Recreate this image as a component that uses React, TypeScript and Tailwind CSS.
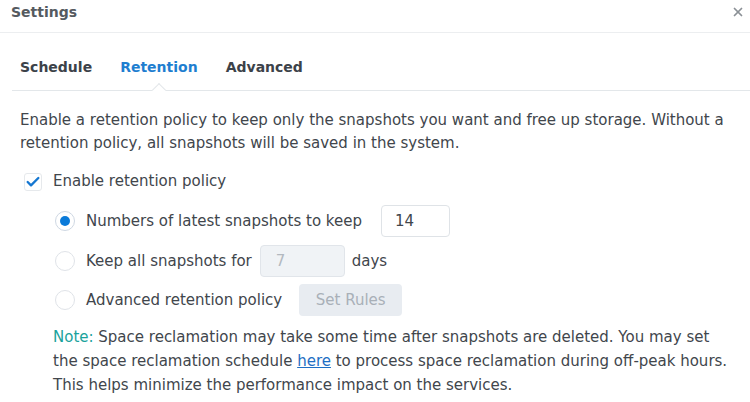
import { Check, X } from "lucide-react";

const font = { fontFamily: '"DejaVu Sans", Verdana, sans-serif' };

function Radio({ checked }: { checked?: boolean }) {
  return (
    <span
      className={`flex h-[20px] w-[20px] shrink-0 items-center justify-center rounded-full border ${
        checked ? "border-[#cfd8e3]" : "border-[#dfe3e8]"
      } bg-white`}
    >
      {checked && <span className="h-[10px] w-[10px] rounded-full bg-[#0a7ad9]" />}
    </span>
  );
}

export default function App() {
  return (
    <div className="h-[402px] w-[750px] overflow-hidden bg-white text-[#41464c]" style={font}>
      <div className="flex h-[33px] items-center justify-between border-b border-[#eceef0] pl-[11px] pr-[5px]">
        <span className="-mt-[8px] text-[14px] font-bold text-[#555a60]">Settings</span>
        <X className="-mt-[8px] h-[14px] w-[14px] text-[#8b9096]" strokeWidth={3} />
      </div>

      <div className="relative ml-[12px] mt-[24px] flex h-[34px] gap-[28px] border-b border-[#e3e7ea] pl-[8px] text-[14px] font-bold">
        <span className="text-[#3c4249]">Schedule</span>
        <span className="text-[#1e7ed0]">Retention</span>
        <span className="text-[#3c4249]">Advanced</span>
        <span className="absolute left-[142px] top-[28px] h-[10px] w-[10px] rotate-45 border-l border-t border-[#e3e7ea] bg-white" />
      </div>

      <div className="pl-[20px] pr-[8px] pt-[18px] text-[15px] leading-[23px]">
        <p>
          Enable a retention policy to keep only the snapshots you want and free up storage. Without a retention
          policy, all snapshots will be saved in the system.
        </p>

        <div className="mt-[15px] flex items-center gap-[11px] pl-[4px]">
          <span className="flex h-[18px] w-[18px] items-center justify-center rounded-[3px] border border-[#e6e9ec]">
            <Check className="h-[16px] w-[16px] text-[#1577d1]" strokeWidth={3.5} />
          </span>
          <span>Enable retention policy</span>
        </div>

        <div className="mt-[12px] flex items-center pl-[35px]">
          <Radio checked />
          <span className="ml-[11px]">Numbers of latest snapshots to keep</span>
          <span className="ml-[19px] flex h-[32px] w-[69px] items-center rounded-[4px] border border-[#dfe3e7] px-[13px]">
            14
          </span>
        </div>

        <div className="mt-[8px] flex items-center pl-[35px]">
          <Radio />
          <span className="ml-[11px]">Keep all snapshots for</span>
          <span className="ml-[8px] flex h-[32px] w-[85px] items-center rounded-[4px] border border-[#e1e5ea] bg-[#f0f3f6] px-[15px] text-[#b3b9c0]">
            7
          </span>
          <span className="ml-[7px]">days</span>
        </div>

        <div className="mt-[7px] flex items-center pl-[35px]">
          <Radio />
          <span className="ml-[11px]">Advanced retention policy</span>
          <span className="ml-[17px] flex h-[32px] w-[103px] items-center justify-center rounded-[4px] bg-[#e8ecf1] text-[#a9b0b8]">
            Set Rules
          </span>
        </div>

        <p className="mt-[9px] pl-[33px] pr-[12px] leading-[24px]">
          <span className="text-[#1ba39c]">Note:</span> Space reclamation may take some time after snapshots are
          deleted. You may set the space reclamation schedule{" "}
          <span className="text-[#1f6fc4] underline">here</span> to process space reclamation during off-peak hours.
          This helps minimize the performance impact on the services.
        </p>
      </div>
    </div>
  );
}
